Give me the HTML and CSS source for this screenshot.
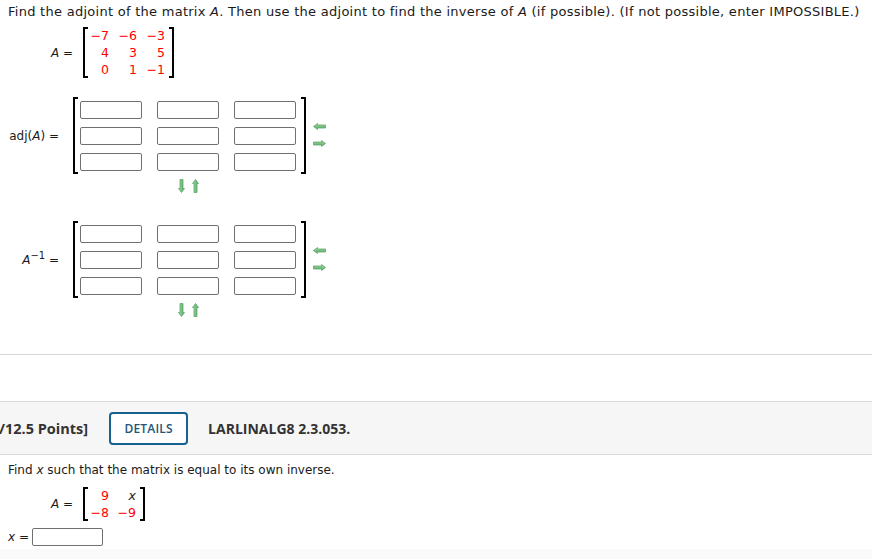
FILE: index.html
```html
<!DOCTYPE html>
<html>
<head>
<meta charset="utf-8">
<link rel="stylesheet" href="styles.css">
</head>
<body>
<svg width="0" height="0" class="defs">
  <defs>
    <linearGradient id="gh" x1="0" y1="0" x2="0" y2="1">
      <stop offset="0" stop-color="#a9dcae"/>
      <stop offset="1" stop-color="#4fa35c"/>
    </linearGradient>
    <linearGradient id="gv" x1="0" y1="0" x2="1" y2="0">
      <stop offset="0" stop-color="#a9dcae"/>
      <stop offset="1" stop-color="#4fa35c"/>
    </linearGradient>
  </defs>
</svg>

<section class="q1">
  <p class="prompt">Find the adjoint of the matrix <i>A</i>. Then use the adjoint to find the inverse of <i>A</i> (if possible). (If not possible, enter IMPOSSIBLE.)</p>

  <div class="eq eq-a">
    <span class="lhs lhs-a"><i>A</i> =</span>
    <span class="br br-l"></span>
    <div class="nums nums3">
      <span>−7</span><span>−6</span><span>−3</span>
      <span>4</span><span>3</span><span>5</span>
      <span>0</span><span>1</span><span>−1</span>
    </div>
    <span class="br br-r"></span>
  </div>

  <div class="eq eq-m adj">
    <span class="lhs lhs-m">adj(<i>A</i>) =</span>
    <span class="br br-l"></span>
    <div class="grid">
      <input class="cell"><input class="cell"><input class="cell">
      <input class="cell"><input class="cell"><input class="cell">
      <input class="cell"><input class="cell"><input class="cell">
    </div>
    <span class="br br-r"></span>
    <div class="rowarrows">
      <svg width="13" height="7" viewBox="0 0 13 7"><path d="M0.5 3.5 L4.5 0.5 L4.5 2 L12.5 2 L12.5 5 L4.5 5 L4.5 6.5 Z" fill="url(#gh)" stroke="#5da968" stroke-width="0.8"/></svg>
      <svg width="13" height="7" viewBox="0 0 13 7"><path d="M12.5 3.5 L8.5 0.5 L8.5 2 L0.5 2 L0.5 5 L8.5 5 L8.5 6.5 Z" fill="url(#gh)" stroke="#5da968" stroke-width="0.8"/></svg>
    </div>
  </div>
  <div class="colarrows">
    <svg width="7" height="14" viewBox="0 0 7 14"><path d="M3.5 13.5 L0.5 9.5 L2 9.5 L2 0.5 L5 0.5 L5 9.5 L6.5 9.5 Z" fill="url(#gv)" stroke="#5da968" stroke-width="0.8"/></svg>
    <svg width="7" height="14" viewBox="0 0 7 14"><path d="M3.5 0.5 L0.5 4.5 L2 4.5 L2 13.5 L5 13.5 L5 4.5 L6.5 4.5 Z" fill="url(#gv)" stroke="#5da968" stroke-width="0.8"/></svg>
  </div>

  <div class="eq eq-m inv">
    <span class="lhs lhs-m"><i>A</i><sup>−1</sup> =</span>
    <span class="br br-l"></span>
    <div class="grid">
      <input class="cell"><input class="cell"><input class="cell">
      <input class="cell"><input class="cell"><input class="cell">
      <input class="cell"><input class="cell"><input class="cell">
    </div>
    <span class="br br-r"></span>
    <div class="rowarrows">
      <svg width="13" height="7" viewBox="0 0 13 7"><path d="M0.5 3.5 L4.5 0.5 L4.5 2 L12.5 2 L12.5 5 L4.5 5 L4.5 6.5 Z" fill="url(#gh)" stroke="#5da968" stroke-width="0.8"/></svg>
      <svg width="13" height="7" viewBox="0 0 13 7"><path d="M12.5 3.5 L8.5 0.5 L8.5 2 L0.5 2 L0.5 5 L8.5 5 L8.5 6.5 Z" fill="url(#gh)" stroke="#5da968" stroke-width="0.8"/></svg>
    </div>
  </div>
  <div class="colarrows">
    <svg width="7" height="14" viewBox="0 0 7 14"><path d="M3.5 13.5 L0.5 9.5 L2 9.5 L2 0.5 L5 0.5 L5 9.5 L6.5 9.5 Z" fill="url(#gv)" stroke="#5da968" stroke-width="0.8"/></svg>
    <svg width="7" height="14" viewBox="0 0 7 14"><path d="M3.5 0.5 L0.5 4.5 L2 4.5 L2 13.5 L5 13.5 L5 4.5 L6.5 4.5 Z" fill="url(#gv)" stroke="#5da968" stroke-width="0.8"/></svg>
  </div>
</section>

<hr class="sep">

<div class="qbar">
  <span class="points">/12.5 Points]</span>
  <button class="details">DETAILS</button>
  <span class="qid">LARLINALG8 2.3.053.</span>
</div>

<section class="q2">
  <p class="prompt2">Find <i>x</i> such that the matrix is equal to its own inverse.</p>
  <div class="eq eq-b">
    <span class="lhs lhs-a"><i>A</i> =</span>
    <span class="br br-l"></span>
    <div class="nums nums2">
      <span>9</span><span class="var"><i>x</i></span>
      <span>−8</span><span>−9</span>
    </div>
    <span class="br br-r"></span>
  </div>
  <div class="xrow">
    <span class="xl"><i>x</i> =</span>
    <input class="xin">
  </div>
</section>
<div class="tail"></div>
</body>
</html>
```

FILE: styles.css
```css
html, body {
  margin: 0;
  padding: 0;
  background: #fff;
}
body {
  font-family: "DejaVu Sans", Verdana, sans-serif;
  font-size: 12px;
  color: #1a1a1a;
  width: 872px;
  overflow: hidden;
}
.defs {
  position: absolute;
  width: 0;
  height: 0;
}
.q1 {
  padding: 4px 0 0 8px;
  height: 354px;
  box-sizing: border-box;
}
.prompt {
  margin: 0;
  font-size: 13px;
  letter-spacing: 0.27px;
  line-height: 16px;
  white-space: nowrap;
}
.eq {
  display: flex;
  align-items: center;
}
.eq-a {
  margin-top: 7px;
}
.lhs {
  text-align: right;
  white-space: nowrap;
  box-sizing: border-box;
}
.lhs-a {
  width: 75px;
  padding-right: 10px;
}
.lhs-m {
  width: 65px;
  padding-right: 14px;
}
.lhs sup {
  font-size: 10px;
  vertical-align: 5px;
  line-height: 0;
}
.br {
  align-self: stretch;
  width: 3px;
  border: 2px solid #000;
}
.br-l {
  border-right: none;
}
.br-r {
  border-left: none;
}
.nums {
  display: grid;
  color: #f00;
  text-align: right;
  line-height: 17px;
  column-gap: 7px;
  font-size: 12.5px;
}
.nums3 {
  grid-template-columns: repeat(3, 21px);
  padding-right: 4px;
}
.nums2 {
  grid-template-columns: repeat(2, 21px);
  column-gap: 6px;
  padding-right: 4px;
}
.var {
  color: #1a1a1a;
}
.adj {
  margin-top: 19px;
}
.inv {
  margin-top: 28px;
}
.grid {
  display: grid;
  grid-template-columns: repeat(3, 62px);
  grid-auto-rows: 18px;
  column-gap: 15px;
  row-gap: 8px;
  padding: 4px 0 3px;
  margin: 0 5px 0 2px;
}
.cell, .xin {
  box-sizing: border-box;
  width: 62px;
  height: 18px;
  margin: 0;
  padding: 0;
  border: 1px solid #707070;
  border-radius: 2px;
  background: #fff;
}
.rowarrows {
  display: flex;
  flex-direction: column;
  gap: 10px;
  margin-left: 7px;
  margin-top: -2px;
}
.rowarrows svg, .colarrows svg {
  display: block;
}
.colarrows {
  display: flex;
  gap: 7px;
  margin: 5px 0 0 170px;
}
.sep {
  margin: 0;
  border: none;
  border-top: 1px solid #d6d6d6;
  height: 0;
}
.qbar {
  margin-top: 46px;
  height: 52px;
  background: #f6f6f6;
  border-top: 1px solid #dcdcdc;
  border-bottom: 1px solid #dcdcdc;
  display: flex;
  align-items: center;
  font-family: "Open Sans", "Noto Sans", sans-serif;
}
.points {
  font-weight: 700;
  font-size: 14.5px;
  color: #333;
  margin-left: -1px;
}
.details {
  margin-left: 21px;
  width: 79px;
  height: 33px;
  box-sizing: border-box;
  border: 2px solid #15628f;
  border-radius: 4px;
  background: #fff;
  color: #21567a;
  font-family: "Open Sans", "Noto Sans", sans-serif;
  font-size: 12px;
  font-weight: 600;
  letter-spacing: 0.2px;
  padding: 0;
}
.qid {
  margin-left: 20px;
  font-weight: 700;
  font-size: 14px;
  color: #333;
}
.q2 {
  padding-left: 8px;
}
.prompt2 {
  margin: 7px 0 0;
  line-height: 16px;
}
.eq-b {
  margin-top: 9px;
}
.xrow {
  display: flex;
  align-items: center;
  margin-top: 7px;
}
.xl {
  width: 24px;
  white-space: nowrap;
}
.xin {
  width: 71px;
  height: 18px;
}
.tail {
  margin-top: 3px;
  height: 20px;
  background: #fafafa;
}
```
